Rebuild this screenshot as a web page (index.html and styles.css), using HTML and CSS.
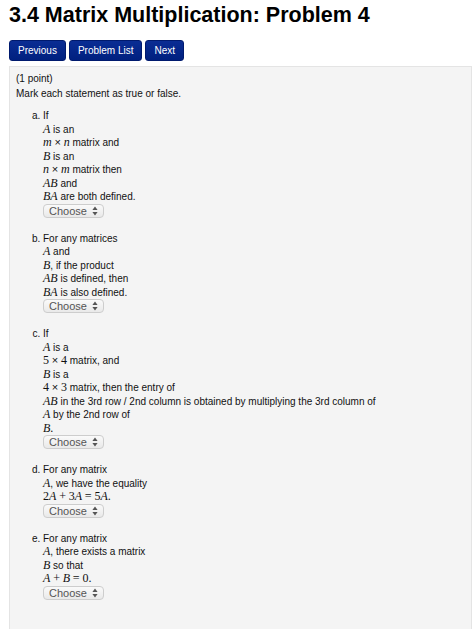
FILE: index.html
```html
<!DOCTYPE html>
<html>
<head>
<meta charset="utf-8">
<link rel="stylesheet" href="styles.css">
</head>
<body>
<h1 class="title">3.4 Matrix Multiplication: Problem 4</h1>
<div class="nav">
  <button class="btn">Previous</button>
  <button class="btn">Problem List</button>
  <button class="btn">Next</button>
</div>
<div class="panel">
  <div class="intro">(1 point)</div>
  <div class="intro">Mark each statement as true or false.</div>
  <ol class="items">
    <li>
      <div class="ln">If</div>
      <div class="ln"><span class="m">A</span> is an</div>
      <div class="ln"><span class="m">m</span> <span class="op">×</span> <span class="m">n</span> matrix and</div>
      <div class="ln"><span class="m">B</span> is an</div>
      <div class="ln"><span class="m">n</span> <span class="op">×</span> <span class="m">m</span> matrix then</div>
      <div class="ln"><span class="m">AB</span> and</div>
      <div class="ln"><span class="m">BA</span> are both defined.</div>
      <div class="sel"><select><option>Choose</option></select><svg class="arr" viewBox="0 0 6 10" width="6" height="10"><path d="M3 0.5 L5.6 4 H0.4 Z M3 9.5 L5.6 6 H0.4 Z" fill="#555"/></svg></div>
    </li>
    <li>
      <div class="ln">For any matrices</div>
      <div class="ln"><span class="m">A</span> and</div>
      <div class="ln"><span class="m">B</span>, if the product</div>
      <div class="ln"><span class="m">AB</span> is defined, then</div>
      <div class="ln"><span class="m">BA</span> is also defined.</div>
      <div class="sel"><select><option>Choose</option></select><svg class="arr" viewBox="0 0 6 10" width="6" height="10"><path d="M3 0.5 L5.6 4 H0.4 Z M3 9.5 L5.6 6 H0.4 Z" fill="#555"/></svg></div>
    </li>
    <li>
      <div class="ln">If</div>
      <div class="ln"><span class="m">A</span> is a</div>
      <div class="ln"><span class="r">5</span> <span class="op">×</span> <span class="r">4</span> matrix, and</div>
      <div class="ln"><span class="m">B</span> is a</div>
      <div class="ln"><span class="r">4</span> <span class="op">×</span> <span class="r">3</span> matrix, then the entry of</div>
      <div class="ln"><span class="m">AB</span> in the 3rd row / 2nd column is obtained by multiplying the 3rd column of</div>
      <div class="ln"><span class="m">A</span> by the 2nd row of</div>
      <div class="ln"><span class="m">B</span><span class="r">.</span></div>
      <div class="sel"><select><option>Choose</option></select><svg class="arr" viewBox="0 0 6 10" width="6" height="10"><path d="M3 0.5 L5.6 4 H0.4 Z M3 9.5 L5.6 6 H0.4 Z" fill="#555"/></svg></div>
    </li>
    <li>
      <div class="ln">For any matrix</div>
      <div class="ln"><span class="m">A</span>, we have the equality</div>
      <div class="ln"><span class="r">2</span><span class="m">A</span> <span class="r">+</span> <span class="r">3</span><span class="m">A</span> <span class="r">=</span> <span class="r">5</span><span class="m">A</span><span class="r">.</span></div>
      <div class="sel"><select><option>Choose</option></select><svg class="arr" viewBox="0 0 6 10" width="6" height="10"><path d="M3 0.5 L5.6 4 H0.4 Z M3 9.5 L5.6 6 H0.4 Z" fill="#555"/></svg></div>
    </li>
    <li>
      <div class="ln">For any matrix</div>
      <div class="ln"><span class="m">A</span>, there exists a matrix</div>
      <div class="ln"><span class="m">B</span> so that</div>
      <div class="ln"><span class="m">A</span> <span class="r">+</span> <span class="m">B</span> <span class="r">=</span> <span class="r">0.</span></div>
      <div class="sel"><select><option>Choose</option></select><svg class="arr" viewBox="0 0 6 10" width="6" height="10"><path d="M3 0.5 L5.6 4 H0.4 Z M3 9.5 L5.6 6 H0.4 Z" fill="#555"/></svg></div>
    </li>
  </ol>
</div>
</body>
</html>
```
FILE: styles.css
```css
html, body {
  margin: 0;
  padding: 0;
  background: #fff;
}
body {
  padding: 0 2px 0 9px;
  font-family: "Liberation Sans", Arial, sans-serif;
  color: #111;
}
.title {
  margin: 0;
  padding-top: 2px;
  font-size: 21.5px;
  line-height: 26px;
  font-weight: bold;
  color: #000;
}
.nav {
  display: flex;
  gap: 3px;
  margin-top: 12px;
}
.btn {
  height: 21px;
  padding: 0 8px;
  border: 1px solid #001a6e;
  border-radius: 3px;
  background: linear-gradient(#0a2d94, #00207f);
  color: #fff;
  font-family: "Liberation Sans", Arial, sans-serif;
  font-size: 10px;
  line-height: 19px;
}
.panel {
  margin-top: 5px;
  background: #f4f4f4;
  border: 1px solid #e4e4e4;
  border-bottom: none;
  padding: 4px 6px 0 6px;
  height: 563px;
  box-sizing: border-box;
}
.intro {
  font-size: 10px;
  line-height: 15px;
}
.items {
  list-style: lower-alpha;
  margin: 8px 0 0 0;
  padding-left: 27px;
  font-size: 10px;
}
.items li {
  margin-bottom: 14px;
}
.items li::marker {
  font-size: 10px;
}
.ln {
  line-height: 13.5px;
  height: 13.5px;
  white-space: nowrap;
}
.m {
  font-family: "Liberation Serif", "Times New Roman", serif;
  font-style: italic;
  font-size: 12px;
}
.r {
  font-family: "Liberation Serif", "Times New Roman", serif;
  font-size: 12px;
}
.op {
  font-size: 11px;
}
.sel {
  position: relative;
  display: inline-block;
  height: 14px;
  vertical-align: top;
}
.sel select {
  appearance: none;
  -webkit-appearance: none;
  width: 61px;
  height: 14px;
  margin: 0;
  padding: 0 0 0 5px;
  border: 1px solid #cdcdcd;
  border-radius: 4px;
  background: linear-gradient(#fafafa, #e9e9e9);
  color: #555;
  font-family: "Liberation Sans", Arial, sans-serif;
  font-size: 11px;
  line-height: 12px;
  display: block;
}
.sel .arr {
  position: absolute;
  right: 6px;
  top: 2px;
  pointer-events: none;
}
```
